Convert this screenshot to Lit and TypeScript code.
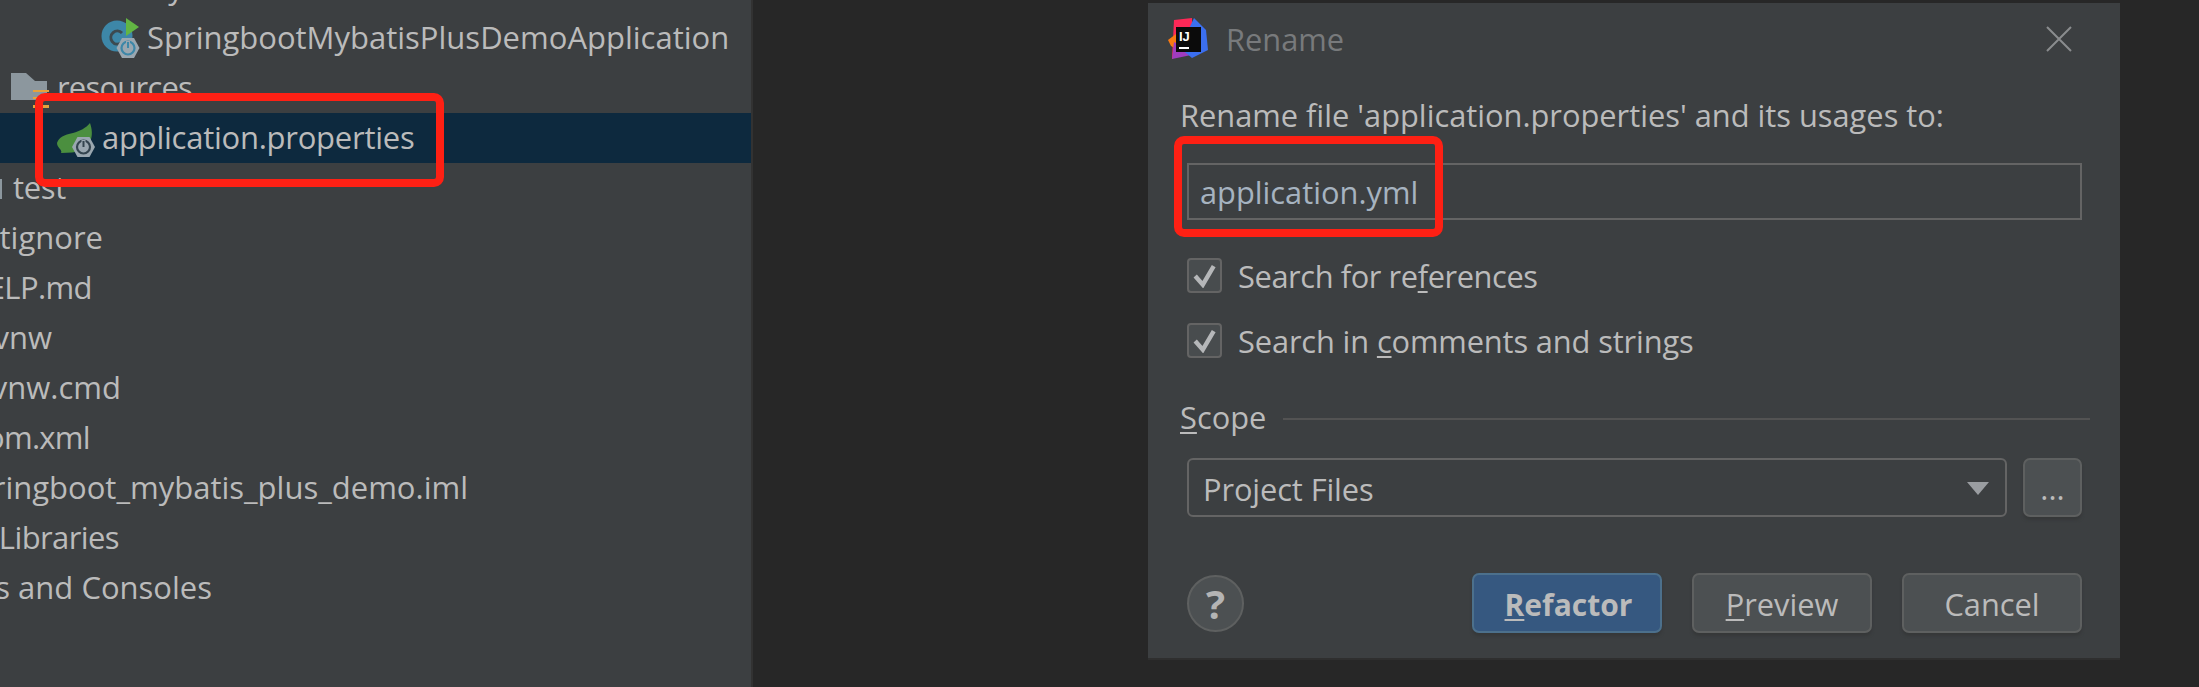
import { LitElement, html, css, svg } from "lit";
import { customElement } from "lit/decorators.js";

const springBadge = (x: number, y: number, ring: string) => svg`
  <g transform="translate(${x} ${y})">
    <path d="M-11.5 0 L-6 -10 L6 -10 L11.5 0 L6 10 L-6 10 Z" fill="#9aa7b0"/>
    <circle r="6.5" fill="none" stroke="${ring}" stroke-width="2.2"/>
    <path d="M0 -7 V0" stroke="#9aa7b0" stroke-width="4"/>
    <path d="M0 -6 V0" stroke="${ring}" stroke-width="2"/>
  </g>`;

type Row = { label: string; start?: number; end?: number; icon?: string; selected?: boolean; ls?: number };

const rows: Row[] = [
  { label: "entity", start: 102, icon: "top" },
  { label: "SpringbootMybatisPlusDemoApplication", start: 147, icon: "app" },
  { label: "resources", start: 57, icon: "folder", ls: -0.8 },
  { label: "application.properties", start: 102, icon: "props", selected: true, ls: -0.25 },
  { label: "test", start: 13, icon: "sliver", ls: -0.3 },
  { label: ".gitignore", end: 103 },
  { label: "HELP.md", end: 92, ls: -0.6 },
  { label: "mvnw", end: 52 },
  { label: "mvnw.cmd", end: 121 },
  { label: "pom.xml", end: 90, ls: -0.7 },
  { label: "springboot_mybatis_plus_demo.iml", end: 468 },
  { label: "External Libraries", end: 119, ls: -0.6 },
  { label: "Scratches and Consoles", end: 212 },
];

const check = svg`<svg width="24" height="24" viewBox="0 0 22 22"><path d="M2 11 L9 19 L19 2" fill="none" stroke="#b5b7b9" stroke-width="4"/></svg>`;

@customElement("app-root")
export class AppRoot extends LitElement {
  static styles = css`
    :host { display: block; width: 2199px; height: 687px; overflow: hidden; background: #272727; position: relative; font-family: "Open Sans", "Noto Sans", sans-serif; color: #bbbbbb; }
    .page { display: flex; height: 687px; }
    .tree { width: 751px; flex: none; background: #3c3f41; border-right: 2px solid #323232; overflow: hidden; }
    .list { margin-top: -37px; }
    .row { height: 50px; box-sizing: border-box; padding-bottom: 3px; display: flex; align-items: center; font-size: 31px; white-space: nowrap; position: relative; }
    .row.sel { background: #0d293e; }
    .row svg { position: absolute; }
    .end { display: flex; justify-content: flex-end; }
    .gap { width: 395px; flex: none; }
    .dialog { width: 972px; height: 657px; margin-top: 3px; background: #3c3f41; flex: none; box-sizing: border-box; display: flex; flex-direction: column; padding: 0 38px 25px 39px; border-bottom: 2px solid #2f2f2f; font-size: 30.8px; }
    .title { height: 72px; flex: none; display: flex; align-items: center; gap: 18px; margin-left: -19px; margin-right: 10px; color: #787a7c; }
    .title .x { margin-left: auto; }
    .msg { margin: 14px 0 0 -7px; height: 52px; line-height: 52px; white-space: nowrap; flex: none; }
    .input { height: 57px; flex: none; border: 2px solid #646464; box-sizing: border-box; margin-top: 22px; display: flex; align-items: center; padding-left: 11px; color: #a6b3c0; }
    .check { display: flex; flex: none; align-items: center; gap: 16px; height: 35px; }
    .check.first { margin-top: 38px; letter-spacing: -0.4px; }
    .check.second { margin-top: 30px; letter-spacing: -0.13px; }
    .box { width: 35px; height: 35px; border: 2px solid #646464; border-radius: 4px; background: #484c4e; box-sizing: border-box; display: flex; align-items: center; justify-content: center; }
    u { text-underline-offset: 3px; text-decoration-thickness: 2px; }
    .scope { display: flex; flex: none; align-items: center; gap: 17px; margin: 39px -8px 0 -7px; height: 44px; }
    .scope span { padding-bottom: 5px; }
    .scope i { flex: 1; height: 2px; background: #535353; }
    .combo-row { display: flex; flex: none; gap: 16px; margin-top: 17px; height: 59px; }
    .combo { flex: 1; border: 2px solid #646464; border-radius: 6px; box-sizing: border-box; display: flex; align-items: center; padding: 2px 16px 0 14px; justify-content: space-between; letter-spacing: -0.1px; }
    .tri { width: 0; height: 0; border-left: 11px solid transparent; border-right: 11px solid transparent; border-top: 13px solid #9a9da1; }
    .btn { box-sizing: border-box; border: 2px solid #5e6060; border-radius: 7px; background: #4c5052; box-shadow: 0 3px 3px #363839; display: flex; align-items: center; justify-content: center; height: 59px; }
    .dots { width: 59px; }
    .actions { display: flex; align-items: center; margin-top: auto; }
    .help { width: 57px; height: 57px; border-radius: 50%; border: 2px solid #5e6060; background: #4c5052; box-sizing: border-box; display: flex; align-items: center; justify-content: center; font-size: 40px; font-weight: 700; color: #b4b4b4; }
    .spacer { flex: 1; }
    .actions .btn { height: 60px; width: 180px; margin-left: 30px; padding-top: 2px; }
    .actions .btn.primary { width: 190px; background: #365880; border-color: #4c708c; font-weight: 700; font-size: 30px; padding-left: 3px; }
    .mark { position: absolute; border: 8px solid #fe2014; border-radius: 10px; box-sizing: border-box; pointer-events: none; }
    .mark.a { left: 35px; top: 93px; width: 409px; height: 94px; }
    .mark.b { left: 1174px; top: 136px; width: 269px; height: 101px; }
  `;

  private icon(kind?: string) {
    if (kind === "top") return html`<svg style="left:56px;top:9px" width="37" height="30" viewBox="0 0 37 30"><path d="M0 0 H15 L24 8 H36 V27 H0 Z" fill="#8c979e"/></svg>`;
    if (kind === "sliver") return html`<svg style="left:0;top:16px" width="2" height="20" viewBox="0 0 2 20"><rect width="2" height="20" fill="#8c979e"/></svg>`;
    if (kind === "app") return html`<svg style="left:100px;top:5px" width="42" height="44" viewBox="0 0 42 44">
      <circle cx="17" cy="18" r="15.5" fill="#3d87a8"/>
      <path d="M22 15 A6.5 6.5 0 1 0 21 25" fill="none" stroke="#3c4a50" stroke-width="3"/>
      <path d="M26 0 L39 9 L26 18 Z" fill="#62b543"/>
      ${springBadge(28, 30, "#3d87a8")}
    </svg>`;
    if (kind === "folder") return html`<svg style="left:11px;top:10px" width="40" height="36" viewBox="0 0 40 36">
      <path d="M0 0 H15 L24 8 H36 V27 H0 Z" fill="#8c979e"/>
      <path d="M22 17 H38 V19 H22 Z M22 24 H38 V26 H22 Z M22 32 H38 V35 H22 Z" fill="#e6a23c"/>
    </svg>`;
    if (kind === "props") return html`<svg style="left:56px;top:10px" width="40" height="36" viewBox="0 0 40 36">
      <path d="M1 20 C3 14 8 12 17 10 C24 8 30 5 34 0 C36 6 37 12 34 19 C30 27 22 30 5 30 C7 27 1 25 1 20 Z" fill="#4b8f3f"/>
      ${springBadge(27.5, 24, "#34444f")}
    </svg>`;
    return "";
  }

  private label(r: Row) {
    const ls = `letter-spacing:${r.ls ?? 0}px`;
    if (r.end !== undefined) return html`<div class="end" style="width:${r.end}px;${ls}"><span>${r.label}</span></div>`;
    return html`<span style="margin-left:${r.start}px;${ls}">${r.label}</span>`;
  }

  render() {
    return html`<div class="page">
      <div class="tree"><div class="list">
        ${rows.map((r) => html`<div class="row ${r.selected ? "sel" : ""}">${this.icon(r.icon)}${this.label(r)}</div>`)}
      </div></div>
      <div class="gap"></div>
      <div class="dialog">
        <div class="title">
          <svg width="40" height="42" viewBox="0 0 40 42">
            <path d="M6 2 L24 0 L24 30 L4 41 Z" fill="#fe2857"/>
            <path d="M0 22 L8 16 L10 32 L3 28 Z" fill="#f97a12"/>
            <path d="M4 41 L6 24 L28 36 Z" fill="#a03cc0"/>
            <path d="M26 0 L38 12 L40 32 L24 40 L12 30 Z" fill="#3b6ff0"/>
            <rect x="8" y="9" width="25" height="25" fill="#0b0b0b"/>
            <rect x="11" y="29" width="10" height="2" fill="#fff"/>
            <text x="11" y="23" font-family="Liberation Sans" font-size="13" font-weight="700" fill="#fff">IJ</text>
          </svg>
          <span>Rename</span>
          <svg class="x" width="26" height="26" viewBox="0 0 26 26"><path d="M1 1 L25 25 M25 1 L1 25" stroke="#8a8c8e" stroke-width="2"/></svg>
        </div>
        <div class="msg">Rename file 'application.properties' and its usages to:</div>
        <div class="input">application.yml</div>
        <div class="check first"><div class="box">${check}</div><span>Search for re<u>f</u>erences</span></div>
        <div class="check second"><div class="box">${check}</div><span>Search in <u>c</u>omments and strings</span></div>
        <div class="scope"><span><u>S</u>cope</span><i></i></div>
        <div class="combo-row">
          <div class="combo"><span>Project Files</span><div class="tri"></div></div>
          <div class="btn dots">...</div>
        </div>
        <div class="actions">
          <div class="help">?</div>
          <div class="spacer"></div>
          <div class="btn primary"><span><u>R</u>efactor</span></div>
          <div class="btn"><span><u>P</u>review</span></div>
          <div class="btn">Cancel</div>
        </div>
      </div>
    </div>
    <div class="mark a"></div>
    <div class="mark b"></div>`;
  }
}
